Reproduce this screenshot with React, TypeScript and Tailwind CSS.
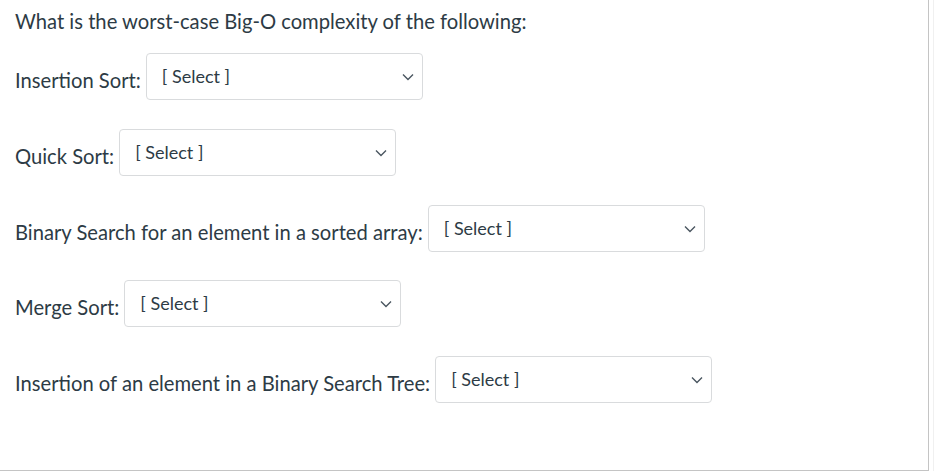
import React from 'react';

const rows = [
  'Insertion Sort:',
  'Quick Sort:',
  'Binary Search for an element in a sorted array:',
  'Merge Sort:',
  'Insertion of an element in a Binary Search Tree:',
];

function Dropdown() {
  return (
    <div className="relative w-[277px] h-[47px] shrink-0 bg-white border border-[#d9dbdd] rounded-[4px] pl-[15px] pt-[11px]">
      <span className="text-[18px] leading-[22px] text-[#2d3b45]">[ Select ]</span>
      <svg
        className="absolute right-[8px] top-[19px]"
        width="12"
        height="8"
        viewBox="0 0 12 8"
        fill="none"
        stroke="#4a5660"
        strokeWidth="1.4"
      >
        <path d="M1 1.5 L6 6.5 L11 1.5" />
      </svg>
    </div>
  );
}

export default function App() {
  return (
    <div className="w-[946px] h-[473px] bg-white flex" style={{ fontFamily: 'Lato, "Open Sans", sans-serif' }}>
      <div className="w-[929px] h-[471px] bg-white border-r border-b border-[#c4c4c4] pl-[15px] pt-[7px] text-[#2d3b45]">
        <p className="text-[20.2px] leading-[28px]">What is the worst-case Big-O complexity of the following:</p>
        <div className="mt-[18px] flex flex-col gap-[28.75px]">
          {rows.map((label) => (
            <div key={label} className="flex items-center gap-[5px]">
              <span className="text-[20.2px] leading-[28px] mt-[7px]">{label}</span>
              <Dropdown />
            </div>
          ))}
        </div>
      </div>
      <div className="w-[4px]" />
      <div className="w-[1px] h-[471px] bg-[#f0f0f0]" />
    </div>
  );
}
